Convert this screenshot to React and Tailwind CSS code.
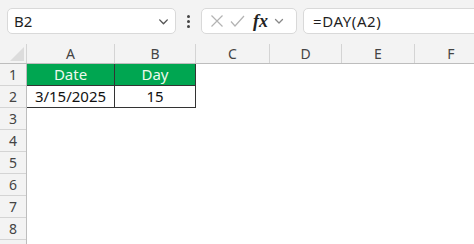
import React from 'react';

const cols = [
  { name: 'A', w: 'w-[88px]' },
  { name: 'B', w: 'w-[81px]' },
  { name: 'C', w: 'w-[74px]' },
  { name: 'D', w: 'w-[72px]' },
  { name: 'E', w: 'w-[73px]' },
  { name: 'F', w: 'w-[73px]' },
];

const rows = [1, 2, 3, 4, 5, 6, 7, 8, ''];

function Chevron({ className }) {
  return (
    <svg className={className} viewBox="0 0 12 12" fill="none" stroke="currentColor" strokeWidth="1.3">
      <path d="M2.5 4.5l3.5 3.5 3.5-3.5" strokeLinecap="round" strokeLinejoin="round" />
    </svg>
  );
}

export default function App() {
  return (
    <div
      className="w-[474px] h-[244px] overflow-hidden bg-white text-[#222]"
      style={{ fontFamily: '"Noto Sans", "Open Sans", sans-serif' }}
    >
      {/* Formula bar */}
      <div className="h-[44px] bg-[#f3f3f3] flex items-start pt-[8px] pl-[7px] w-[500px]">
        <div className="w-[169px] h-[26px] bg-white border border-[#d9d9d9] rounded-[5px] flex items-center justify-between pl-[6px] pr-[5px]">
          <span className="text-[15px] leading-none text-[#1f1f1f]">B2</span>
          <Chevron className="w-[13px] h-[13px] text-[#555]" />
        </div>
        <div className="w-[25px] h-[26px] flex flex-col items-center justify-center gap-[2px]">
          <span className="w-[3px] h-[3px] rounded-full bg-[#444]" />
          <span className="w-[3px] h-[3px] rounded-full bg-[#444]" />
          <span className="w-[3px] h-[3px] rounded-full bg-[#444]" />
        </div>
        <div className="w-[96px] h-[26px] bg-white border border-[#d9d9d9] rounded-[5px] flex items-center pl-[8px]">
          <svg className="w-[14px] h-[14px] text-[#b3b3b3]" viewBox="0 0 14 14" fill="none" stroke="currentColor" strokeWidth="1.2">
            <path d="M1.5 1.5l11 11M12.5 1.5l-11 11" />
          </svg>
          <svg className="w-[15px] h-[14px] ml-[6px] text-[#b3b3b3]" viewBox="0 0 15 14" fill="none" stroke="currentColor" strokeWidth="1.2">
            <path d="M1 7.5l4 4.5 9-10" />
          </svg>
          <span className="ml-[8px] text-[18px] leading-none italic font-bold text-[#222]" style={{ fontFamily: '"Liberation Serif", serif' }}>
            fx
          </span>
          <Chevron className="w-[12px] h-[12px] ml-[5px] text-[#888]" />
        </div>
        <div className="ml-[6px] flex-1 h-[26px] bg-white border border-[#d9d9d9] rounded-[5px] flex items-center pl-[9px]">
          <span className="text-[15px] leading-none text-[#1f1f1f] tracking-[0.6px]">=DAY(A2)</span>
        </div>
      </div>

      {/* Column headers */}
      <div className="flex h-[20px] bg-[#f3f3f3] border-b border-[#bdbdbd] w-[500px]">
        <div className="w-[27px] h-full border-r border-[#d4d4d4] flex items-end justify-end pr-[2px] pb-[2px]">
          <div className="w-[14px] h-[14px] bg-[#dcdcdc]" style={{ clipPath: 'polygon(100% 0, 100% 100%, 0 100%)' }} />
        </div>
        {cols.map((c) => (
          <div key={c.name} className={`${c.w} h-full border-r border-[#d4d4d4] flex items-center justify-center text-[14px] text-[#444]`}>
            {c.name}
          </div>
        ))}
      </div>

      {/* Rows */}
      <div className="flex">
        <div className="w-[27px] bg-[#f3f3f3] border-r border-[#bdbdbd] flex flex-col">
          {rows.map((r, i) => (
            <div key={i} className="h-[22px] shrink-0 border-b border-[#d4d4d4] flex items-center justify-center text-[14px] text-[#444]">
              {r}
            </div>
          ))}
        </div>
        <div className="flex flex-col">
          <div className="flex h-[22px]">
            <div className="w-[88px] bg-[#00a651] border-r border-b border-[#333] flex items-center justify-center text-[15px] text-[#eef9ee]">
              Date
            </div>
            <div className="w-[81px] bg-[#00a651] border-r border-b border-[#333] flex items-center justify-center text-[15px] text-[#eef9ee]">
              Day
            </div>
          </div>
          <div className="flex h-[22px]">
            <div className="w-[88px] border-r border-b border-[#333] flex items-center justify-center text-[15px] text-[#111]">
              3/15/2025
            </div>
            <div className="w-[81px] border-r border-b border-[#333] flex items-center justify-center text-[15px] text-[#111]">
              15
            </div>
          </div>
        </div>
      </div>
    </div>
  );
}
